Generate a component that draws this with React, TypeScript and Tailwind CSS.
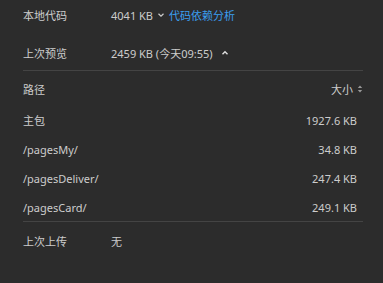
import React from "react";

const rows = [
  { path: "主包", size: "1927.6 KB" },
  { path: "/pagesMy/", size: "34.8 KB" },
  { path: "/pagesDeliver/", size: "247.4 KB" },
  { path: "/pagesCard/", size: "249.1 KB" },
];

const ChevronDown = () => (
  <svg width="8" height="8" viewBox="0 0 8 8" className="mx-[4px]">
    <path d="M1.5 2.8 L4 5.2 L6.5 2.8" stroke="#cccccc" strokeWidth="1.2" fill="none" />
  </svg>
);

const ChevronUp = () => (
  <svg width="8" height="8" viewBox="0 0 8 8" className="ml-[8px]">
    <path d="M1.5 5.2 L4 2.8 L6.5 5.2" stroke="#e0e0e0" strokeWidth="1.4" fill="none" />
  </svg>
);

const SortIcon = () => (
  <svg width="6" height="10" viewBox="0 0 6 10" className="ml-[4px]">
    <path d="M0.8 4 L3 1.6 L5.2 4 Z" fill="#999999" />
    <path d="M0.8 6 L3 8.4 L5.2 6 Z" fill="#999999" />
  </svg>
);

export default function App() {
  return (
    <div
      className="w-[383px] h-[283px] bg-[#2c2c2c] text-[#cccccc] text-[11px] leading-none pl-[23px] pr-[20px] pt-[9px]"
      style={{ fontFamily: '"Noto Sans", "Noto Sans CJK SC", sans-serif' }}
    >
      <div className="flex items-center h-[12px]">
        <span className="w-[88px]">本地代码</span>
        <span>4041 KB</span>
        <ChevronDown />
        <span className="text-[#3b9eef]">代码依赖分析</span>
      </div>
      <div className="flex items-center h-[12px] mt-[26px]">
        <span className="w-[88px]">上次预览</span>
        <span>2459 KB (今天09:55)</span>
        <ChevronUp />
      </div>
      <div className="border-b border-[#444444] mt-[11px]" />
      <div className="flex items-center justify-between h-[12px] mt-[12px]">
        <span>路径</span>
        <span className="flex items-center">
          大小
          <SortIcon />
        </span>
      </div>
      <div className="flex flex-col gap-[17px] mt-[19px] pr-[6px]">
        {rows.map((r) => (
          <div key={r.path} className="flex items-center justify-between h-[12px]">
            <span>{r.path}</span>
            <span>{r.size}</span>
          </div>
        ))}
      </div>
      <div className="border-b border-[#444444] mt-[8px]" />
      <div className="flex items-center h-[12px] mt-[13px]">
        <span className="w-[88px]">上次上传</span>
        <span>无</span>
      </div>
    </div>
  );
}
